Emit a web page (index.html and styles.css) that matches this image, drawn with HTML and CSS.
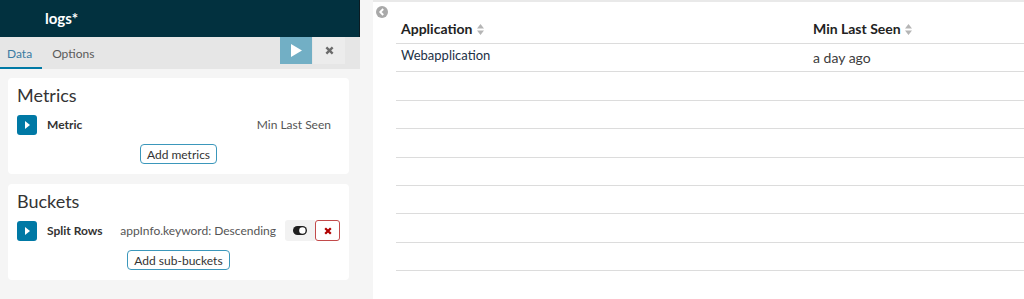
FILE: index.html
```html
<!DOCTYPE html>
<html lang="en">
<head>
    <meta charset="UTF-8">
    <title>logs* - Visualize</title>
    <link rel="stylesheet" href="styles.css">
</head>
<body>
    <div class="app">
        <aside class="editor">
            <div class="sidebar">
                <div class="index_title">logs*</div>

                <div class="sidebar_nav">
                    <div class="tabs">
                        <a class="tab active">Data</a>
                        <a class="tab">Options</a>
                    </div>
                    <div class="nav_actions">
                        <button class="btn_apply" disabled>
                            <svg width="11" height="13" viewBox="0 0 11 13"><path d="M0 0L11 6.5L0 13Z" fill="#fff"/></svg>
                        </button>
                        <button class="btn_discard">
                            <svg width="9" height="9" viewBox="0 0 10 10"><path d="M1.5 1.5L8.5 8.5M8.5 1.5L1.5 8.5" stroke="#6b6b6b" stroke-width="2.6"/></svg>
                        </button>
                    </div>
                </div>

                <div class="sidebar_body">
                    <section class="agg_group">
                        <h3 class="agg_title">Metrics</h3>
                        <div class="agg_row">
                            <button class="agg_toggle">
                                <svg width="5" height="8" viewBox="0 0 5 8"><path d="M0 0L5 4L0 8Z" fill="#fff"/></svg>
                            </button>
                            <span class="agg_label">Metric</span>
                            <span class="agg_desc">Min Last Seen</span>
                        </div>
                        <div class="agg_add"><button class="btn_add">Add metrics</button></div>
                    </section>

                    <section class="agg_group">
                        <h3 class="agg_title">Buckets</h3>
                        <div class="agg_row">
                            <button class="agg_toggle">
                                <svg width="5" height="8" viewBox="0 0 5 8"><path d="M0 0L5 4L0 8Z" fill="#fff"/></svg>
                            </button>
                            <span class="agg_label">Split Rows</span>
                            <span class="agg_desc">appInfo.keyword: Descending</span>
                            <div class="agg_controls">
                                <button class="btn_enable">
                                    <svg width="14" height="9" viewBox="0 0 14 9"><rect width="14" height="9" rx="4.5" fill="#1f1f1f"/><circle cx="9.4" cy="4.5" r="3.2" fill="#fff"/></svg>
                                </button>
                                <button class="btn_remove">
                                    <svg width="8" height="8" viewBox="0 0 10 10"><path d="M1.5 1.5L8.5 8.5M8.5 1.5L1.5 8.5" stroke="#b00000" stroke-width="2.8"/></svg>
                                </button>
                            </div>
                        </div>
                        <div class="agg_add"><button class="btn_add">Add sub-buckets</button></div>
                    </section>
                </div>
            </div>
        </aside>

        <main class="vis">
            <button class="collapse_btn">
                <svg width="12" height="12" viewBox="0 0 12 12"><circle cx="6" cy="6" r="6" fill="#a9a9a9"/><path d="M7.2 3L4.3 6L7.2 9" stroke="#fff" stroke-width="1.9" fill="none"/></svg>
            </button>
            <table class="data_table">
                <thead>
                    <tr>
                        <th class="col_app">Application <svg class="sort" width="7" height="11" viewBox="0 0 7 11"><path d="M0 4.5L3.5 0L7 4.5ZM0 6.5L3.5 11L7 6.5Z" fill="#b5b5b5"/></svg></th>
                        <th>Min Last Seen <svg class="sort" width="7" height="11" viewBox="0 0 7 11"><path d="M0 4.5L3.5 0L7 4.5ZM0 6.5L3.5 11L7 6.5Z" fill="#b5b5b5"/></svg></th>
                    </tr>
                </thead>
                <tbody>
                    <tr><td class="cell_term">Webapplication</td><td>a day ago</td></tr>
                    <tr><td></td><td></td></tr>
                    <tr><td></td><td></td></tr>
                    <tr><td></td><td></td></tr>
                    <tr><td></td><td></td></tr>
                    <tr><td></td><td></td></tr>
                    <tr><td></td><td></td></tr>
                    <tr><td></td><td></td></tr>
                </tbody>
            </table>
        </main>
    </div>
</body>
</html>
```

FILE: styles.css
```css
* {
    margin: 0;
    padding: 0;
    box-sizing: border-box;
}

body {
    font-family: Lato, "Open Sans", sans-serif;
    color: #333;
    background-color: #fff;
    overflow: hidden;
}

button {
    font-family: inherit;
    border: none;
    background: none;
    display: flex;
    align-items: center;
    justify-content: center;
}

.app {
    display: flex;
    height: 299px;
}

.editor {
    width: 373px;
    background-color: #f5f5f5;
}

.sidebar {
    width: 360px;
}

.index_title {
    height: 37px;
    padding-left: 45px;
    background-color: #02313f;
    border-right: 1px solid #0b1b22;
    color: #fff;
    font-weight: bold;
    font-size: 15px;
    line-height: 36px;
}

.sidebar_nav {
    display: flex;
    justify-content: space-between;
    height: 32px;
    background-color: #e6e6e6;
}

.tabs {
    display: flex;
}

.tab {
    height: 32px;
    padding: 3px 10px 0;
    font-size: 12px;
    line-height: 27px;
    color: #5a5a5a;
    border-bottom: 2px solid transparent;
}

.tab.active {
    padding-left: 7px;
    color: #3a7ba2;
    border-bottom-color: #0079a5;
}

.nav_actions {
    display: flex;
    align-items: flex-start;
    margin-right: 15px;
}

.btn_apply {
    width: 32px;
    height: 27px;
    background-color: #72afc5;
}

.btn_discard {
    width: 32px;
    height: 27px;
    background-color: #ececec;
    margin-left: 1px;
}

.sidebar_body {
    padding: 9px 11px 0 8px;
}

.agg_group {
    background-color: #fff;
    border-radius: 4px;
    padding: 5px 9px 10px;
    margin-bottom: 10px;
}

.agg_title {
    font-size: 18px;
    font-weight: normal;
    line-height: 24px;
    color: #343434;
}

.agg_row {
    display: flex;
    align-items: center;
    height: 21px;
    margin-top: 7px;
}

.agg_toggle {
    width: 20px;
    height: 20px;
    border-radius: 3px;
    background-color: #0079a5;
}

.agg_label {
    margin-left: 10px;
    font-size: 12px;
    font-weight: bold;
    color: #333;
}

.agg_desc {
    flex: 1;
    text-align: right;
    margin: 0 9px 0 12px;
    font-size: 12px;
    color: #555;
}

.agg_controls {
    display: flex;
}

.btn_enable {
    width: 30px;
    height: 21px;
    background-color: #f2f2f2;
    border-radius: 3px 0 0 3px;
}

.btn_remove {
    width: 25px;
    height: 21px;
    border: 1px solid #c24a4a;
    border-radius: 3px;
}

.agg_add {
    display: flex;
    justify-content: center;
    margin-top: 9px;
}

.btn_add {
    height: 20px;
    padding: 0 6px;
    border: 1px solid #3b97bb;
    border-radius: 4px;
    font-size: 12px;
    color: #333;
    background-color: #fff;
}

.vis {
    flex: 1;
    position: relative;
    border-top: 2px solid #e9e9e9;
    padding: 11px 0 0 23px;
}

.collapse_btn {
    position: absolute;
    left: 3px;
    top: 4px;
}

.data_table {
    width: 100%;
    border-collapse: collapse;
}

.data_table th {
    text-align: left;
    font-size: 14px;
    font-weight: bold;
    line-height: 20px;
    padding: 6px 5px 4px;
    color: #222;
    border-bottom: 1px solid #dcdcdc;
}

.data_table .col_app {
    width: 412px;
}

.sort {
    vertical-align: -1px;
    margin-left: 1px;
}

.data_table td {
    height: 28.4px;
    padding: 0 5px;
    font-size: 14px;
    color: #3c3c3c;
    border-bottom: 1px solid #dcdcdc;
}

.data_table .cell_term {
    font-size: 13px;
    color: #1d3146;
    vertical-align: top;
    padding-top: 3px;
}
```
